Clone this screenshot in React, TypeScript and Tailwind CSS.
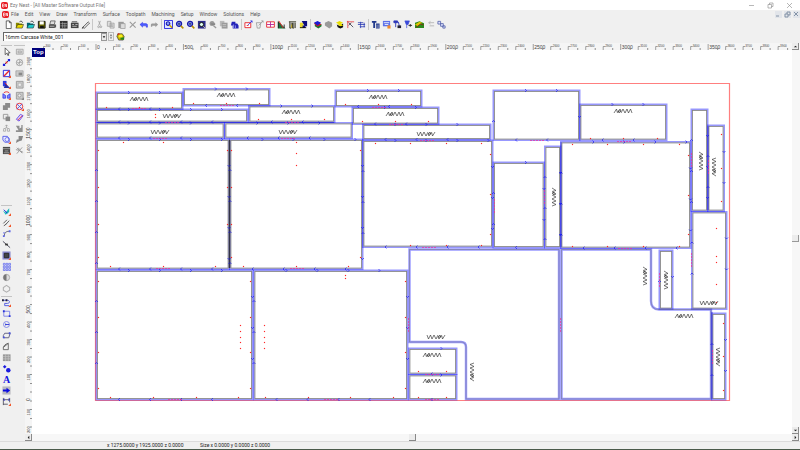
import React from 'react';
import clsx from 'clsx';

const MENUS = ['File', 'Edit', 'View', 'Draw', 'Transform', 'Surface', 'Toolpath', 'Machining', 'Setup', 'Window', 'Solutions', 'Help'];

const GRAY = '#9a9a9a';
const BLUE = '#1c1ce0';
const RED = '#e8252b';

const corner = <path d="M10 7v3H7z" fill="#f0562a" />;

const ICONS: Record<string, React.ReactNode> = {
  new: <path d="M2.5 1h3.5l2 2v6.500h-5.500zM6 1v2h2" fill="#fff" stroke="#333" strokeWidth=".8" />,
  open: <><path d="M1 3h3l1 1h3v5H1z" fill="#8a8a00" /><path d="M3 5h6.500L8 9H1z" fill="#e8d800" stroke="#222" strokeWidth=".6" /><path d="M5 2c1-1 3-1 3.500 1" fill="none" stroke="#111" strokeWidth=".8" /></>,
  import: <><path d="M1 3h3l1 1h3v5H1z" fill="#067" /><path d="M3 5h6.500L8 9H1z" fill="#1fc9c9" stroke="#222" strokeWidth=".6" /><path d="M5 2c1-1 3-1 3.500 1" fill="none" stroke="#111" strokeWidth=".8" /></>,
  save: <><path d="M1.500 1.500h7.500v7.500H1.500z" fill="#6c6c00" stroke="#111" /><path d="M3 1.500h4.500V5H3z" fill="#fff" /><path d="M3.500 6.500h4V9h-4z" fill="#111" /></>,
  print: <><path d="M3 1h5l-1 4H2z" fill="#ddd" stroke="#333" strokeWidth=".7" /><path d="M1 5h8v3l-2 1H1z" fill="#555" /><path d="M2 7h5" stroke="#ccc" strokeWidth=".8" /></>,
  table: <><path d="M1 1h8.500v8.500H1z" fill="#333" /><path d="M1.500 4h7.500M1.500 6.500h7.500M4 2v7M6.500 3v6" stroke="#bbb" strokeWidth=".6" /></>,
  camera: <><path d="M1 3h8.500v6H1z" fill="#444" /><path d="M2.500 5h2M6 5h2.500M2.500 7h5" stroke="#ddd" strokeWidth=".8" /><path d="M2 2h6" stroke="#444" /></>,
  pencil: <><path d="M2 8l6-6 1.500 1.500-6 6z" fill="#ddd" stroke="#444" strokeWidth=".8" /><path d="M1.500 9.500l1-2" stroke="#111" /></>,
  cut: <path d="M4 1l2 5M6 1L4 6M3 7.500a1 1 0 102 0 1 1 0 00-2 0M5.500 7.500a1 1 0 102 0 1 1 0 00-2 0" fill="none" stroke={GRAY} strokeWidth=".8" />,
  copy: <path d="M1.500 1.500h4V7h-4zM4.500 3.500h4.500V9h-4.500zM5.500 5.500h2.500M5.500 7h2.500" fill="#ddd" stroke={GRAY} strokeWidth=".8" />,
  paste: <><path d="M1.500 2h6v7h-6z" fill={GRAY} /><path d="M4 4h5v5.500H4z" fill="#ddd" stroke={GRAY} strokeWidth=".8" /></>,
  del: <path d="M2 2l6.500 6.500M8.500 2L2 8.500" stroke={GRAY} strokeWidth="1.200" />,
  undo: <path d="M1 5l3-2.500V4h4l1.500 1v3H8V6.500H4V8z" fill="#4a5cff" stroke={BLUE} strokeWidth=".4" />,
  redo: <path d="M9 5L6 2.500V4H2L1 5v2.500h1.500V6.500H6V8z" fill={GRAY} />,
  zoomWin: <><path d="M.5.5h9v9h-9z" fill="#dfe6ff" stroke={BLUE} /><circle cx="4.500" cy="4" r="2" fill="#8aa0ff" stroke="#1818a8" strokeWidth="1.200" /><path d="M6 5.500l3 3" stroke="#c8a000" strokeWidth="1.600" /></>,
  zoom: <><circle cx="4.500" cy="4.300" r="2.800" fill="#8aa0ff" stroke="#1818a8" strokeWidth="1.400" /><path d="M3 4.300h3M4.500 3v3" stroke="#113" strokeWidth=".7" /><path d="M6.500 6.500l2.800 2.800" stroke="#b89000" strokeWidth="1.700" /></>,
  zoomAll: <><path d="M1 1h8.500v8.500H1z" fill="#2c2c8c" /><circle cx="5" cy="5" r="2.300" fill="#dfe" stroke="#111" /><path d="M7 7l2 2" stroke="#dca" /></>,
  pan: <><circle cx="4.500" cy="4" r="2.800" fill={GRAY} /><path d="M3 3.500h5v2H4z" fill="#888" /><path d="M6 6l3 3" stroke={GRAY} strokeWidth="1.500" /></>,
  pages: <><path d="M1 1h5v6H1z" fill="#bbb" /><path d="M3 3h6.500v6.500H3z" fill={GRAY} /><path d="M4 5h4M4 7h4" stroke="#ddd" strokeWidth=".6" /></>,
  spindle: <><path d="M2 2h4v2h2l1.500 2v3.500H3V6H1z" fill="#2323b8" /><path d="M4 5v4M6 6v3" stroke="#c9c9ff" strokeWidth=".7" /></>,
  redRect: <><path d="M1 3h6.500v5.500H1z" fill="#fff" stroke={RED} /><path d="M4 6l5-5M7 1h2v2" fill="none" stroke={BLUE} strokeWidth=".8" /><path d="M3 5.500h2v1H3z" fill={RED} /></>,
  grayRect: <path d="M1.500 3h5l-1 6h-3zM4 6l5-5M7 1h2v2" fill="none" stroke={GRAY} strokeWidth=".9" />,
  redGrid: <><path d="M.7 2h8.600v6H.7z" fill="#fff" stroke={RED} /><path d="M1 5h8M5 2v6" stroke="#b3269a" /></>,
  wedge: <><path d="M1 1v8.500h8.500z" fill="#1b6f3a" /><path d="M2 1l5 8" stroke={RED} /><path d="M1.500 2v7M8 5v4" stroke="#222" /></>,
  tools: <><path d="M1 2h8M2 2v7h1.500V3M5 3v6h1.500V3M8 3v6" fill="none" stroke="#443" strokeWidth="1.100" /><path d="M4 5v4" stroke="#c5ad20" /></>,
  part: <><path d="M1 3h4v6H1z" fill="#e7d82c" /><path d="M3 1h6v6H7v2H4V6h2z" fill="#0c0c7c" /><path d="M1 8.500h7" stroke="#111" /></>,
  layers: <><path d="M2 5l4-2 3.500 2v2L6 9.500 2 7z" fill="#187a2c" /><path d="M1 4l4-2 4.500 3L5 7.500z" fill="#c41a2a" /><path d="M1 3l4-2 4 2-4 3z" fill="#1b1bd4" /></>,
  grayLayers: <path d="M1 3l4-2 4 2v4L6 9.500 1 6z" fill={GRAY} />,
  yellowLayers: <><path d="M1 3l4-2 4 2-4 2z" fill="#e8e000" /><path d="M2 5l3 1.500L9 4v4L6 9.500 3 8z" fill="#111" /><path d="M3 5l3-1 3 2-3 1z" fill="#f0e400" /></>,
  axis: <><path d="M1 2h8M2 1v8" stroke={RED} strokeWidth=".8" /><path d="M3 3l5 5M6 3L3 6" fill="none" stroke="#223" strokeWidth=".8" /></>,
  join: <path d="M1 3h6M1 5h8M3 7.500h6M4 2v7M8 3v5" stroke="#2d3db4" strokeWidth=".9" />,
  nest: <><path d="M1 1h5v2H1zM2.500 3h2v6h-2zM5.500 4H9.500v5.500H5.500z" fill="#223a8c" /><path d="M6.500 5v4M8 5v4" stroke="#ccd" strokeWidth=".6" /></>,
  nestOut: <><path d="M1 1h8v6H1z" fill="#5c70e8" /><path d="M2 3h6M3 5h4" stroke="#fff" strokeWidth=".9" /><path d="M6 6h3.500v3.500H6z" fill="#f08a2a" /></>,
  drill: <><path d="M1 1h4v2H1zM3 3v5M6 2l1 5" stroke="#2b36b8" fill="#2b36b8" /><path d="M5 6h4v3H5z" fill="#223" /></>,
  probe: <><path d="M1 1h5L4.500 5h-2zM3 5v4" fill="#3a4ad8" stroke="#3a4ad8" strokeWidth=".8" /><path d="M5 6h4M7 4.500v3" stroke="#222" /></>,
  surface: <><path d="M0 3l5-1.500 5 2V9H0z" fill="#2a8a1c" /><path d="M0 5l5-3 3 1-5 4z" fill="#dcc400" /><path d="M1 8.500l5-4 3.500 1" fill="none" stroke="#8a2a10" /></>,
  arrows: <path d="M9 3H3l2-1.500M3 3l2 1.500M4 6.500h5" fill="none" stroke="#b5b5b5" />,
  chain: <path d="M1 1.500h3v3H1zM4 4h3v3H4zM6.500 6.500h2.500v2.500h-2.500z" fill="#dfe3ff" stroke="#5360a8" strokeWidth=".9" />,
  palette: <><path d="M2 2h5l2 3-1 4H3L1 5z" fill="#c5b800" stroke="#333" strokeWidth=".7" /><path d="M2 1.500h2v2H2z" fill="#dd2a1a" /><path d="M5 6h4v2.500H5z" fill="#23851f" /><path d="M3 3h4v3H3z" fill="#f7ee20" /></>,

  cursor: <path d="M3.500 1v7.500l1.800-1.700L6.500 9.500l1-.4-1-2.600H9z" fill="#fff" stroke="#333" strokeWidth=".8" />,
  line: <><path d="M2 8l6-6" stroke="#333" /><path d="M1 6.500h2.500V9H1zM6.500 1H9v2.500H6.500z" fill={BLUE} /><path d="M4 4h2v2H4z" fill={RED} /></>,
  trim: <><path d="M1.500 1.500h7v7h-7z" fill="#f4f4ff" stroke={BLUE} /><path d="M2 8l6-6" stroke={RED} strokeWidth="1.500" />{corner}</>,
  rotate: <><path d="M1 1h4v6H1z" fill="#2a3be0" /><path d="M4 4l5 5H2z" fill="#2431a8" /><path d="M3 3l3 3" stroke={RED} />{corner}</>,
  mirror: <><path d="M1 8V3l3 2v3zM9 8V3L6 5v3z" fill="#7c86ff" stroke={BLUE} strokeWidth=".7" /><path d="M2 2c2-1.500 4-1.500 6 0" fill="none" stroke={RED} />{corner}</>,
  union: <path d="M3.500 1H9v5.500H6.500V9H1V3.500h2.500z" fill="#8b8b8b" />,
  subtract: <><path d="M1.500 1.500h5v5h-5z" fill="#eee" stroke={GRAY} /><path d="M4 4h5v5H4z" fill="#888" /></>,
  nodes: <path d="M5 1v3M3.500 2.500L5 1l1.500 1.500M2 5h2v3H1.500zM6 5h2l.5 3H6zM4 4h2" fill="none" stroke={GRAY} strokeWidth=".8" />,
  offset: <><path d="M1 1.500h5l2 2.500v4H3L1 5.500z" fill="#eef" stroke="#5058e8" /><circle cx="5.500" cy="5" r="2.200" fill="none" stroke="#5058e8" strokeWidth=".8" />{corner}</>,
  machine: <><path d="M1 1h8v8H1z" fill="#4a4a4a" /><path d="M1 3h8M3 5.500h4M2 7.500h6" stroke="#bbb" strokeWidth=".8" />{corner}</>,
  frame: <path d="M1.500 2.500h7.500v5.500H1.500zM3.500 4.500h3.500v2H3.500z" fill="#ddd" stroke={GRAY} strokeWidth=".8" />,
  target: <><circle cx="5" cy="5" r="3.500" fill="none" stroke={GRAY} /><path d="M2 5h6M5 2v6M2 8l6-6" stroke={GRAY} strokeWidth=".7" /></>,
  stamp: <><path d="M1 2h8v6H1z" fill="#ccc" stroke={GRAY} strokeWidth=".8" /><path d="M4 4h4v3H4z" fill="#888" /></>,
  sheet: <><path d="M1.500 1.500h7.500v7.500H1.500z" fill="#ccc" stroke={GRAY} /><path d="M3.500 3.500h3.500v3.500H3.500z" fill="#eee" stroke={GRAY} strokeWidth=".6" /></>,
  sheetCut: <><path d="M1.500 1.500h7.500v7.500H1.500z" fill="#ccc" stroke={GRAY} /><circle cx="5" cy="5" r="1.800" fill="#eee" stroke={GRAY} /><path d="M10 7v3H7z" fill="#888" /></>,
  redTarget: <><circle cx="5" cy="5" r="3.600" fill="none" stroke={RED} /><path d="M2 2l6 6M8 2L2 8" stroke="#4a4ae8" strokeWidth=".9" />{corner}</>,
  redLink: <><path d="M1.500 7l4.500-5.500 3 1.500L4.500 9z" fill="#dcd6ff" stroke="#6a4ae8" /><path d="M3 8l5-5" stroke={RED} strokeWidth=".9" /></>,
  post: <path d="M1 2h4v3l2-1V1h1.500v8H1V7h3z" fill="#8f8f8f" />,
  fold: <path d="M4 1h5L7.500 6l-3 1L1 9l1-4h2z" fill="#868686" />,
  spark: <path d="M2 2l6 6M8 1.500L2 8.500M5 5L1 4M5 5l4 2M4 2l1 3" stroke={GRAY} />,

  teal: <><path d="M1 4l3 2 4-4.500v4L4 8.500z" fill="#1cb8b8" /><path d="M2 3l4 4" stroke={BLUE} />{corner}</>,
  hatch: <><path d="M1.500 6l4-4M3.500 8l4.500-5M2 9l3-3" stroke="#555" />{corner}</>,
  arc: <><path d="M2.500 8c0-4 2-5.500 5.500-5.500" fill="none" stroke="#556" strokeWidth=".9" /><path d="M1 7h2v2H1zM7.500 1.500h2v2h-2zM1.500 3.500h1.500V5H1.500z" fill="#5c64e8" /></>,
  seg: <><path d="M1 1.500l8 7" stroke="#445" /><path d="M3.500 4h3v2h-3z" fill="#333" /></>,
  pocket: <><path d="M.5.500h9v9h-9z" fill="#8a8ad0" /><path d="M2.500 2.500h5v5h-5z" fill="#444" stroke="#222" />{corner}</>,
  array: <path d="M1.500 1.500h2v2h-2zM4.500 1.500h2v2h-2zM7.500 1.500h2v2h-2zM1.500 4.500h2v2h-2zM4.500 4.500h2v2h-2zM7.500 4.500h2v2h-2zM1.500 7.500h2v2h-2zM4.500 7.500h2v2h-2zM7.500 7.500h2v2h-2z" fill="none" stroke="#5a64f0" strokeWidth=".8" />,
  half: <><circle cx="5" cy="5" r="3.500" fill="#ddd" stroke={GRAY} strokeWidth=".8" /><path d="M5 1.500a3.500 3.500 0 000 7z" fill="#777" /></>,
  ring: <path d="M5 1.500L8.500 4v3L5 9 1.500 7V4z" fill="none" stroke="#b0b0b0" strokeWidth="1.200" />,
  poly: <><path d="M1 2.500h5c3 0 3 3.500 0 3.500H3v2.500h5" fill="none" stroke="#4650e0" /><path d="M0 1.500h2v2H0zM4 1.500h2v2H4z" fill="#223" />{corner}</>,
  rect: <><path d="M2 2.500h6.500V8H2z" fill="none" stroke="#7a80e8" /><path d="M1 1.500h2v2H1zM7.500 7h2v2h-2z" fill="#2a34d8" /></>,
  circle: <><circle cx="5" cy="5" r="3.300" fill="none" stroke="#7a80e8" /><path d="M4 5h4M4 4v2" stroke="#2a34d8" /></>,
  para: <><path d="M3 2.500h6L7.500 7.500H1.500V5z" fill="none" stroke="#5a5a7a" /><path d="M1 6h2v2H1zM7.500 1.500h2v2h-2z" fill="#4650e0" /></>,
  sector: <path d="M1.500 8.500V6L7 1.500v7zM7 1.500C4 2 2 4 1.500 6" fill="none" stroke="#555" strokeWidth=".9" />,
  grid: <><path d="M1 1.500h8.500v7.500H1z" fill="#999" /><path d="M1 4h8.500M1 6.500h8.500M4 1.500V9M7 1.500V9" stroke="#c8c8c8" strokeWidth=".7" /></>,
  dots: <><path d="M1 3l2-2 2 2-2 2z" fill={BLUE} /><circle cx="7" cy="7" r="2.500" fill={BLUE} /></>,
  move: <><path d="M.5.500h9v9h-9z" fill="#b8b8c0" /><path d="M1 4h4V2l4 3-4 3V6H1z" fill="#0a0ae0" /></>,
  dim: <><path d="M1.500 1v8M8.500 1v5M1.500 3h7M1.500 8h5" stroke="#445" strokeWidth=".9" /><path d="M3 4l-1.500-1L3 2M7 4l1.500-1L7 2" stroke={BLUE} fill="none" strokeWidth=".8" />{corner}</>,
};

const TOOLBAR = [
  ['new', 'open', 'import', 'save', 'print', 'table', 'camera', 'pencil'],
  ['cut', 'copy', 'paste', 'del', 'undo', 'redo'],
  ['zoomWin', 'zoom', 'zoom', 'zoomAll', 'pan', 'pages', 'spindle'],
  ['redRect', 'grayRect', 'redGrid', 'wedge', 'tools', 'part'],
  ['layers', 'grayLayers', 'yellowLayers', 'axis', 'join'],
  ['nest', 'nestOut', 'drill', 'probe', 'surface', 'arrows', 'chain'],
];

const EDIT_TOOLS = ['cursor', 'line', 'trim', 'rotate', 'mirror', 'union', 'subtract', 'nodes', 'offset', 'machine'];
const NEST_TOOLS = ['frame', 'target', 'stamp', 'sheet', 'sheetCut', 'redTarget', 'redLink', 'post', 'fold', 'spark'];
const PATH_TOOLS = ['teal', 'hatch', 'arc', 'seg', 'pocket', 'array', 'half', 'ring'];
const DRAW_TOOLS = ['poly', 'rect', 'circle', 'para', 'sector', 'grid', 'dots', 'text', 'move', 'dim'];

const ToolButton = ({ name }: { name: string }) => (
  <button aria-label={name} className="flex h-[11px] w-[11px] shrink-0 items-center justify-center">
    {name === 'text' ? (
      <span className="font-['Liberation_Serif',serif] text-[10px] leading-[11px] font-bold text-[#1414e0]">A</span>
    ) : (
      <svg viewBox="0 0 10 10" className="h-[9px] w-[9px]">{ICONS[name]}</svg>
    )}
  </button>
);

const Palette = ({ tools, className }: { tools: string[]; className?: string }) => (
  <div className={clsx('flex flex-col items-center border-t border-[#c4c4c4]', className)}>
    {tools.map((t, i) => <ToolButton key={i} name={t} />)}
  </div>
);

const Logo = () => (
  <svg viewBox="0 0 14 14" className="h-[7px] w-[7px] shrink-0">
    <rect width="14" height="14" rx="4" fill="#e81c24" />
    <path d="M3 4h3M3 7h2.500M3 10h3M3 4v6M8 10V4l3 6V4" stroke="#fff" strokeWidth="1.400" fill="none" />
  </svg>
);

// 100 mm of sheet is 17.49 px on screen
const STEP = 17.49;

const TopRuler = () => (
  <svg viewBox="25 43 766 7" className="h-[7px] w-[766px] shrink-0 font-['Liberation_Sans',sans-serif]">
    {Array.from({ length: 43 }, (_, i) => i - 3).map((n) => {
      const x = 96 + n * STEP;
      const major = n % 5 === 0;
      return (
        <g key={n} fill="#444">
          <path d={major ? `M${x} 44v6` : `M${x} 50v-3.500h2`} stroke="#666" strokeWidth=".6" fill="none" />
          <path d={`M${x + 9.500} 48v2`} stroke="#666" strokeWidth=".7" />
          <text x={x + (major ? 1 : 2)} y={major ? 49 : 47} fontSize={major ? 5 : 3}>{Math.abs(n * 100)}</text>
        </g>
      );
    })}
  </svg>
);

const SideRuler = () => (
  <svg viewBox="25 50 7 384" className="h-[384px] w-[7px] shrink-0 font-['Liberation_Sans',sans-serif]">
    {Array.from({ length: 22 }, (_, i) => i - 2).map((n) => {
      const y = 401 - n * STEP;
      const major = n % 5 === 0;
      return (
        <g key={n} fill="#333">
          <path d={`M30 ${y - 9}h2M30 ${y}h2`} stroke="#666" strokeWidth=".7" />
          <text transform={`translate(30 ${major ? y : y - 3}) rotate(-90)`} fontSize={major ? 5 : 4}>{Math.abs(n * 100)}</text>
        </g>
      );
    })}
  </svg>
);

type Rect = [number, number, number, number];

const PARTS: Rect[] = [
  [97, 93, 182, 108.500], [184, 89.500, 269, 105], [97, 110, 247, 121.500], [97, 123.500, 223.500, 137.500],
  [225.500, 123.500, 351.500, 137.500], [249.500, 106.500, 334, 121.500], [336, 91, 421, 106],
  [353, 108, 438, 123.500], [363.500, 125, 490, 139], [97, 140, 228.500, 268.500], [230.500, 140, 362, 268.500],
  [363.500, 141, 492, 246.500], [494, 91, 579, 139.500], [580.500, 105, 666, 139.500], [494, 163, 543.500, 247],
  [545.500, 147, 560, 247], [561.500, 142.500, 690, 247.500], [692, 110, 707, 210.500], [708.500, 126, 723.500, 210.500],
  [692.500, 212.500, 726, 308.500], [97, 271, 252, 399], [254.500, 271, 407, 399], [409.500, 349, 456, 373.500],
  [409.500, 375.500, 456, 399], [660, 251, 672, 308.500], [712.500, 314, 725, 399],
];

const NOTCHED = [
  'M409.500 249.500H559V399H466V347Q466 342 461 342H409.500z',
  'M561.500 249.500H651V301Q651 309.500 659 309.500H711V399H561.500z',
];

// x, y, rotation
const LABELS: [number, number, number][] = [
  [139, 99, 0], [226, 95, 0], [291, 112, 0], [378, 97, 0], [395, 114, 0], [623, 111, 0],
  [432, 355, 0], [432, 381, 0], [684, 316, 0], [172, 116, 180], [160, 132, 180], [288, 132, 180],
  [426, 134, 180], [709, 303, 180], [436, 337, 180], [554, 197, 90], [701, 161, 90], [645, 276, 90],
  [666, 280, 90], [714, 167, -90], [472, 372, -90], [718, 357, -90],
];

const HOLES: [number, number][] = [
  [106, 107], [139, 107], [172, 107], [193, 103], [226, 103], [259, 103], [258, 119], [291, 119], [324, 119], [345, 104], [378, 104],
  [411, 104], [362, 121], [395, 121], [428, 121], [155, 114], [155, 117], [296, 153], [296, 165], [375, 143], [410, 143],
  [446, 143], [481, 143], [98, 150], [231, 150], [227, 150], [360, 150], [98, 187], [231, 187], [227, 187], [98, 224],
  [231, 224], [227, 224], [98, 257], [231, 257], [360, 257], [110, 266], [163, 266], [215, 266], [243, 266], [296, 266], [348, 266],
  [123, 142], [296, 142], [163, 142], [345, 275], [345, 278], [240, 325], [240, 331], [240, 337], [240, 342], [240, 348],
  [264, 325], [264, 331], [264, 337], [264, 342], [264, 348], [98, 281], [98, 317], [98, 352], [98, 388], [250, 281],
  [250, 317], [250, 352], [250, 388], [405, 281], [405, 317], [405, 352], [405, 388], [110, 397], [153, 397], [196, 397],
  [238, 397], [265, 397], [308, 397], [350, 397], [393, 397], [418, 397], [446, 397], [418, 371], [446, 371], [410, 245],
  [446, 245], [481, 245], [490, 154], [490, 194], [490, 234], [590, 138], [623, 138], [657, 138], [572, 144], [607, 144],
  [643, 144], [679, 144], [572, 246], [607, 246], [643, 246], [679, 246], [688, 155], [688, 195], [688, 234], [721, 134],
  [721, 168], [721, 201], [716, 228], [716, 256], [716, 262], [716, 284], [716, 302], [723, 323], [723, 356], [723, 390],
];

// lead-in marks where the cutter enters each part
const LEADS: [number, number, 'h' | 'v'][] = [
  [132, 108.500, 'h'], [220, 105.500, 'h'], [165, 122.500, 'h'], [285, 122.500, 'h'], [372, 107.500, 'h'], [389, 124.500, 'h'],
  [153, 138.500, 'h'], [281, 138.500, 'h'], [420, 140.500, 'h'], [530, 140.500, 'h'], [617, 141.500, 'h'], [156, 268.500, 'h'],
  [290, 268.500, 'h'], [422, 247.500, 'h'], [618, 248.500, 'h'], [168, 399.500, 'h'], [324, 399.500, 'h'],
  [425, 374.500, 'h'], [425, 399.500, 'h'], [544.500, 190, 'v'], [494.500, 199, 'v'], [691.500, 153, 'v'], [708.500, 160, 'v'],
  [408.500, 318, 'v'], [560.500, 318, 'v'], [659.500, 273, 'v'], [691.500, 253, 'v'], [712.500, 350, 'v'],
];

const edgeMarks = ([x1, y1, x2, y2]: Rect) => {
  let d = '';
  for (let x = x1 + 31; x < x2 - 4; x += 31) d += `M${x} ${y1 - 2}l1.500 1.500l-1.500 1.500M${x - 8} ${y2 - 1}l-1.500 1.500l1.500 1.500`;
  for (let y = y1 + 31; y < y2 - 4; y += 31) d += `M${x1 - 2} ${y}l1.500-1.500l1.500 1.500M${x2 - 1} ${y - 6}l1.500 1.500l1.500-1.500`;
  return d;
};

const Sheet = () => (
  <svg viewBox="32 50 759 384" className="h-[384px] w-[759px] shrink-0">
    <path d="M95.500 83.500h634v317h-634z" fill="none" stroke="#ff7f7f" strokeWidth="1.200" />
    <g fill="none" stroke="#1a1aff" strokeOpacity=".45" strokeWidth="1.600">
      {PARTS.map(([x1, y1, x2, y2], i) => (
        <rect key={i} x={x1 - 0.7} y={y1 - 0.7} width={x2 - x1 + 1.4} height={y2 - y1 + 1.4} />
      ))}
      {NOTCHED.map((d) => <path key={d} d={d} strokeWidth="2.400" />)}
    </g>
    <g fill="none" stroke="#70706c" strokeOpacity=".85" strokeWidth=".9">
      {PARTS.map(([x1, y1, x2, y2], i) => (
        <rect key={i} x={x1 + 0.4} y={y1 + 0.4} width={x2 - x1 - 0.8} height={y2 - y1 - 0.8} />
      ))}
      {NOTCHED.map((d) => <path key={d} d={d} strokeOpacity=".5" />)}
    </g>
    <path d="M229.500 140v128" stroke="#333346" strokeWidth="1.500" />
    <path d="M97 122.500h237M561 142v105M712 312v87M708 126v84" stroke="#1c1cd0" strokeOpacity=".6" />
    <path d={[...PARTS, [409, 249, 559, 399] as Rect, [561, 249, 711, 399] as Rect].slice(0, 26).map(edgeMarks).join('')} fill="none" stroke="#1010f0" strokeOpacity=".8" strokeWidth=".8" />
    <path
      d={LEADS.map(([x, y, dir]) => `M${x} ${y}${dir}15`).join('')}
      stroke="#f0309a" strokeOpacity=".7" strokeDasharray="2 1" fill="none"
    />
    <path d={HOLES.map(([x, y]) => `M${x} ${y}h1v1h-1z`).join('')} fill="#ff2b2b" stroke="#ff2b2b" strokeOpacity=".35" strokeWidth=".5" />
    {LABELS.map(([x, y, r], i) => (
      <path
        key={i}
        transform={`translate(${x} ${y}) rotate(${r})`}
        d="M-9 2l2.500-4l1 4M-5 1l2-3l1 2l-2 2l-1-2h3M-2 2l2-4l2 4l2-4l1.500 4l2-4l1.500 4"
        fill="none" stroke="#222" strokeWidth=".6"
      />
    ))}
  </svg>
);

const ScrollButton = ({ label, d }: { label: string; d: string }) => (
  <button aria-label={label} className="flex h-[7px] w-[7px] shrink-0 items-center justify-center border-r border-b border-[#8a8a8a] bg-[#ececec]">
    <svg viewBox="0 0 6 6" className="h-[5px] w-[5px]"><path d={d} fill="#222" /></svg>
  </button>
);

export default function App() {
  return (
    <div className="flex h-screen flex-col overflow-hidden bg-[#f0f0f0] font-['Roboto',sans-serif] text-[5px] leading-[7px] text-[#555]">
      <header className="flex h-[10px] shrink-0 items-center gap-[2px] bg-white pl-[1px] text-[#777]">
        <Logo />
        <h1 className="flex-1">Ezy Nest - [All Master Software Output File]</h1>
        <div className="flex gap-[12px] pr-[7px]">
          {['M1 3.500h5', 'M1 2.500h3.500V6H1zM2.500 2.500V1H6v3.500H4.500', 'M1 1l5 5M6 1L1 6'].map((d, i) => (
            <button key={d} aria-label={['Minimize', 'Restore', 'Close'][i]} className="h-[7px] w-[7px]">
              <svg viewBox="0 0 7 7" className="h-[7px] w-[7px]"><path d={d} fill="none" stroke="#888" strokeWidth=".6" /></svg>
            </button>
          ))}
        </div>
      </header>

      <nav className="flex h-[8px] shrink-0 items-center pl-[2px]">
        <Logo />
        <div className="flex flex-1 gap-[6px] pl-[2px]">
          {MENUS.map((m) => <button key={m}>{m}</button>)}
        </div>
        <div className="flex gap-[2px]">
          {['M1 5h3', 'M1 3h3v3H1zM3 3V1h3v3H4', 'M1 1l4 4M5 1L1 5'].map((d, i) => (
            <button key={d} aria-label={['Minimize document', 'Restore document', 'Close document'][i]} className="h-[7px] w-[7px] bg-[#e2e5ea]">
              <svg viewBox="0 0 7 7" className="h-[7px] w-[7px]"><path d={d} fill="none" stroke="#7a8aa0" strokeWidth=".9" /></svg>
            </button>
          ))}
        </div>
      </nav>

      <div className="flex h-[13px] shrink-0 items-center pl-[3px]">
        {TOOLBAR.map((group, i) => (
          <div key={i} className={clsx('flex', i > 0 && 'ml-[1px] border-l border-[#c8c8c8] pl-[1px]')}>
            {group.map((t, j) => <ToolButton key={j} name={t} />)}
          </div>
        ))}
      </div>

      <div className="flex h-[12px] shrink-0 items-center gap-[1px] pb-[1px] pl-[3px]">
        <div className="relative flex h-[9px] w-[104px] border-t border-l border-[#666] bg-white">
          <select aria-label="Material" className="w-full appearance-none bg-white pl-[1px] text-[5px] leading-[7px] text-[#222]">
            <option>16mm Carcase White_001</option>
          </select>
          <svg viewBox="0 0 6 8" className="pointer-events-none absolute top-0 right-0 h-[8px] w-[6px] border border-[#999] bg-[#e8e8e8]">
            <path d="M1 3h4L3 5.500z" fill="#111" />
          </svg>
        </div>
        <button aria-label="Next sheet" className="h-[9px] w-[6px] border border-[#bbb]">
          <svg viewBox="0 0 4 8" className="h-full w-full"><path d="M1 3l1-1.500L3 3zM1 5l1 1.500L3 5zM0 4h4" fill="#222" stroke="#999" strokeWidth=".3" /></svg>
        </button>
        <ToolButton name="palette" />
      </div>

      <main className="flex min-h-0 flex-1">
        <aside className="flex w-[25px] shrink-0 gap-[2px] pt-[2px] pl-[1px]">
          <div className="flex w-[11px] flex-col">
            <Palette tools={EDIT_TOOLS} />
            <Palette tools={PATH_TOOLS} className="mt-[49px]" />
            <Palette tools={DRAW_TOOLS} className="mt-[2px]" />
          </div>
          <Palette tools={NEST_TOOLS} className="w-[11px] self-start" />
        </aside>

        <section className="flex min-w-0 flex-1 flex-col">
          <div className="flex min-h-0 flex-1">
            <div className="flex min-w-0 flex-1 flex-col">
              <div className="h-[7px] shrink-0 overflow-hidden bg-[#f5f5f5]"><TopRuler /></div>
              <div className="relative flex min-h-0 flex-1 overflow-hidden">
                <div className="shrink-0 bg-[#f5f5f5]"><SideRuler /></div>
                <div className="min-w-0 flex-1 overflow-hidden bg-white"><Sheet /></div>
              </div>
            </div>
            <div className="flex w-[8px] shrink-0 flex-col justify-between bg-[#f7f7f7]">
              <ScrollButton label="Scroll up" d="M1 4l2-2 2 2z" />
              <button aria-label="Vertical thumb" className="h-[7px] w-[7px] border-r border-b border-[#999] bg-[#ececec]" />
              <ScrollButton label="Scroll down" d="M1 2l2 2 2-2z" />
            </div>
          </div>
          <div className="flex h-[7px] shrink-0 justify-between bg-[#f7f7f7] pr-[1px]">
            <ScrollButton label="Scroll left" d="M4 1L2 3l2 2z" />
            <button aria-label="Horizontal thumb" className="h-[7px] w-[7px] border-r border-b border-[#888] bg-[#ececec]" />
            <ScrollButton label="Scroll right" d="M2 1l2 2-2 2z" />
          </div>
        </section>
      </main>

      <footer className="flex h-[9px] shrink-0 items-center border-t border-b border-t-[#dcdcdc] border-b-[#4a5a4a] pl-[107px] text-[#222]">
        <span className="w-[93px]">x 1275.0000 y 1925.0000 z 0.0000</span>
        <span>Size x 0.0000 y 0.0000 z 0.0000</span>
      </footer>

      <div className="absolute top-[48px] left-[32px] bg-[#00007c] px-[1px] font-['Liberation_Sans',sans-serif] text-[6px] leading-[9px] font-bold text-white">Top</div>
    </div>
  );
}
